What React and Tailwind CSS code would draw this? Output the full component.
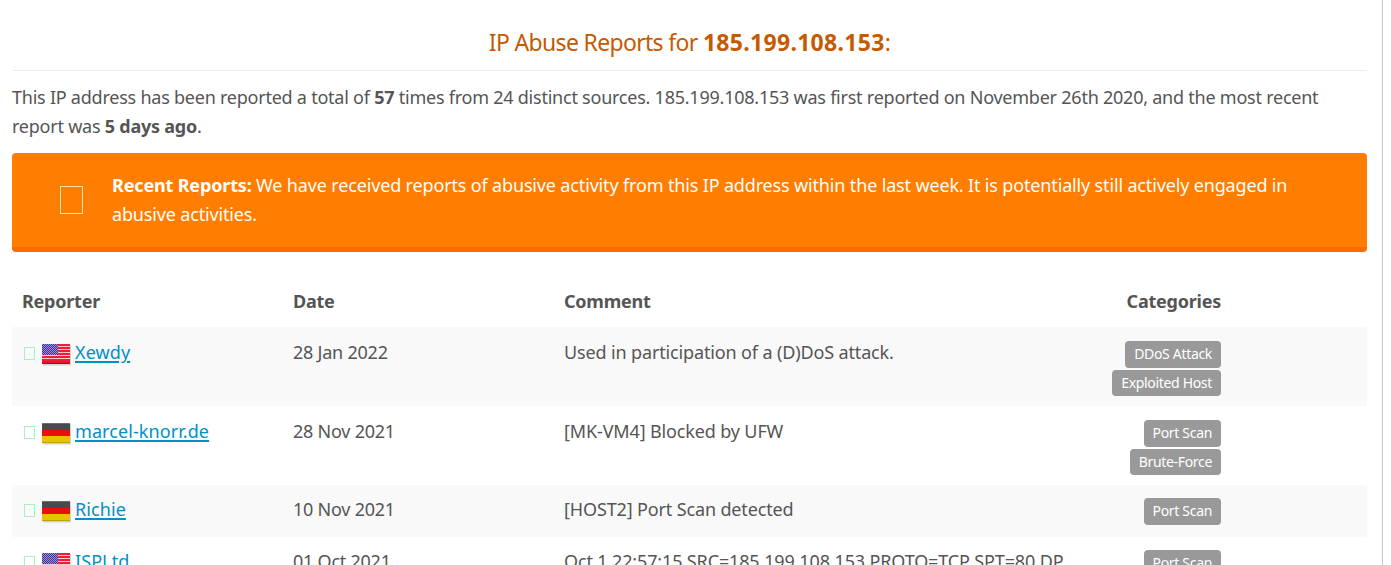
const font = { fontFamily: '"Noto Sans", sans-serif' };

function UsFlag({ id }) {
  const stripes = [0, 3, 6, 9, 12, 15];
  return (
    <svg width="30" height="23" viewBox="0 0 30 23" className="shrink-0">
      <defs>
        <pattern id={id} width="2" height="2" patternUnits="userSpaceOnUse">
          <rect width="2" height="2" fill="#43309a" />
          <rect width="1" height="1" fill="#9a8fd0" />
          <rect x="1" y="1" width="1" height="1" fill="#9a8fd0" />
        </pattern>
      </defs>
      <rect x="1" y="1" width="28" height="20.5" fill="#d2d2d2" />
      <rect x="0" y="0" width="28" height="20" fill="#fbc8c8" />
      {stripes.map((y) => (
        <rect key={y} x="0" y={y} width="28" height="2" fill="#f01c3c" />
      ))}
      <rect x="0" y="0" width="16" height="11" fill={`url(#${id})`} />
      <rect x="0" y="17" width="28" height="2" fill="#e8142f" />
      <rect x="0" y="19" width="28" height="1" fill="#a8102a" />
    </svg>
  );
}

function DeFlag() {
  return (
    <svg width="30" height="23" viewBox="0 0 30 23" className="shrink-0">
      <rect x="1" y="1" width="28" height="20.5" fill="#d2d2d2" />
      <rect x="0" y="0" width="28" height="7" fill="#4a4a4a" />
      <rect x="0" y="0" width="28" height="1" fill="#6e6e6e" />
      <rect x="0" y="7" width="28" height="6" fill="#e81008" />
      <rect x="0" y="13" width="28" height="7" fill="#e8c400" />
      <rect x="0" y="19" width="28" height="1" fill="#bfa000" />
    </svg>
  );
}

function Badge({ children }) {
  return (
    <span className="block rounded-[4px] bg-[#999999] px-[9px] h-[26.5px] leading-[26px] text-[14px] text-white whitespace-nowrap tracking-[-0.32px]">
      {children}
    </span>
  );
}

function Row({ flag, name, date, comment, cats, grey, h, tall }) {
  const pad = tall ? "pt-[12px]" : "pt-[11px]";
  return (
    <div className={`grid grid-cols-[271px_271px_667px_1fr] ${grey ? "bg-[#f9f9f9]" : "bg-white"}`} style={{ height: h }}>
      <div className={`flex items-start pl-[12px] leading-[27px] ${pad}`}>
        <span className="mt-[8px] w-[11px] h-[13px] border border-[#aaf0c4] shrink-0" />
        <span className="ml-[7px] mt-[5px]">{flag === "us" ? <UsFlag id={`stars-${name}`} /> : <DeFlag />}</span>
        <a className="text-[#0090c8] underline decoration-2 underline-offset-[2px] ml-[3px] tracking-[0.08px]">{name}</a>
      </div>
      <div className={`pl-[10px] leading-[27px] ${pad}`}>{date}</div>
      <div className={`col-start-3 row-start-1 pl-[10px] leading-[27px] whitespace-nowrap overflow-hidden tracking-[-0.14px] ${pad}`}>{comment}</div>
      <div className={`col-start-3 row-start-1 justify-self-end flex flex-col items-end gap-[2px] ${tall ? "pt-[14px]" : "pt-[13px]"}`}>
        {cats.map((c) => (
          <Badge key={c}>{c}</Badge>
        ))}
      </div>
    </div>
  );
}

export default function App() {
  return (
    <div className="h-[565px] w-[1391px] overflow-hidden bg-white text-[#555555] text-[18px] tracking-[-0.235px]" style={font}>
      <div className="w-[1383px] h-[565px] border-r border-[#c8c8c8] px-[12px]">
        <div className="w-[1355px]">
          <h1 className="h-[71px] border-b border-[#eeeeee] pt-[26px] text-center text-[23px] leading-[32px] text-[#c55a00] tracking-[-0.67px]">
            IP Abuse Reports for <b className="font-bold tracking-[0.3px]">185.199.108.153</b>:
          </h1>
          <p className="mt-[12px] leading-[29px]">
            This IP address has been reported a total of <b>57</b> times from 24 distinct sources. 185.199.108.153 was first reported on November 26th 2020, and the most recent report was <b>5 days ago</b>.
          </p>
          <div className="mt-[12px] h-[99px] rounded-[4px] bg-[#ff7d00] border-b-[5px] border-[#ff6a00] text-white flex tracking-[-0.155px]">
            <div className="w-[100px] shrink-0 flex justify-center items-start pt-[33px] pl-[18px]">
              <span className="block w-[23px] h-[28px] border border-[#ffe0b0]" />
            </div>
            <div className="pt-[18px] leading-[29px] pr-[70px]">
              <b>Recent Reports:</b> We have received reports of abusive activity from this IP address within the last week. It is potentially still actively engaged in abusive activities.
            </div>
          </div>
          <div className="mt-[29px] grid grid-cols-[271px_271px_667px_1fr] h-[46px] font-bold leading-[40px]">
            <div className="pl-[10px]">Reporter</div>
            <div className="pl-[10px]">Date</div>
            <div className="pl-[10px] col-start-3 row-start-1">Comment</div>
            <div className="col-start-3 row-start-1 justify-self-end">Categories</div>
          </div>
          <Row grey tall h={79} flag="us" name="Xewdy" date="28 Jan 2022" comment="Used in participation of a (D)DoS attack." cats={["DDoS Attack", "Exploited Host"]} />
          <Row tall h={79} flag="de" name="marcel-knorr.de" date="28 Nov 2021" comment="[MK-VM4] Blocked by UFW" cats={["Port Scan", "Brute-Force"]} />
          <Row grey h={52} flag="de" name="Richie" date="10 Nov 2021" comment="[HOST2] Port Scan detected" cats={["Port Scan"]} />
          <Row h={79} flag="us" name="ISPLtd" date="01 Oct 2021" comment="Oct 1 22:57:15 SRC=185.199.108.153 PROTO=TCP SPT=80 DP" cats={["Port Scan"]} />
        </div>
      </div>
    </div>
  );
}
